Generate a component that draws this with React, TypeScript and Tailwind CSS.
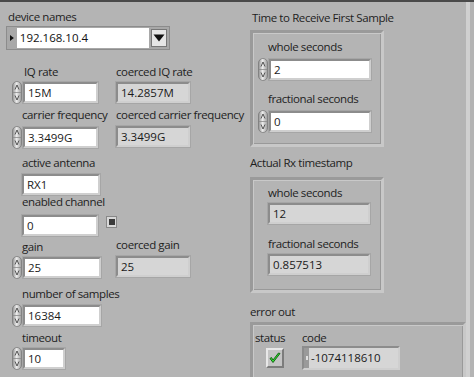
import React from 'react'

const font = { fontFamily: '"Open Sans", "DejaVu Sans", sans-serif' }

function Spinner() {
  return (
    <svg width="10" height="23" viewBox="0 0 10 23" className="shrink-0">
      <defs>
        <linearGradient id="sp" x1="0" x2="1" y1="0" y2="0">
          <stop offset="0" stopColor="#8e8e8e" />
          <stop offset="0.45" stopColor="#ececec" />
          <stop offset="1" stopColor="#9a9a9a" />
        </linearGradient>
      </defs>
      <rect x="0.5" y="0.5" width="9" height="22" rx="4.5" fill="url(#sp)" stroke="#7a7a7a" strokeWidth="0.8" />
      <line x1="1" y1="11.5" x2="9" y2="11.5" stroke="#8a8a8a" strokeWidth="0.8" />
      <path d="M3 8.5 L5 4 L7 8.5" fill="none" stroke="#444" strokeWidth="0.9" />
      <path d="M3 14.5 L5 19 L7 14.5" fill="none" stroke="#444" strokeWidth="0.9" />
    </svg>
  )
}

function Box({ value, w, ind = false }: { value: string; w: string; ind?: boolean }) {
  return (
    <div
      className={`${w} h-[21px] border-2 border-t-[#8c8c8c] border-l-[#8c8c8c] border-b-[#cfcfcf] border-r-[#cfcfcf] ${
        ind ? 'bg-[#d6d6d6]' : 'bg-white'
      } flex items-center pl-[3px] text-[11.5px] text-[#1a1a1a] leading-none shadow-[0_0_0_1px_#a6a6a6]`}
    >
      {value}
    </div>
  )
}

function Label({ children, className = '' }: { children: React.ReactNode; className?: string }) {
  return <div className={`h-[14px] leading-[14px] text-[11.5px] text-[#1e1e1e] tracking-[-0.4px] whitespace-nowrap ${className}`}>{children}</div>
}

function Cluster({ children, className = '' }: { children: React.ReactNode; className?: string }) {
  return (
    <div
      className={`border-[3px] border-t-[#9a9a9a] border-l-[#9a9a9a] border-b-[#c8c8c8] border-r-[#c8c8c8] shadow-[inset_1px_1px_0_#c9c9c9,inset_-1px_-1px_0_#999] ${className}`}
    >
      {children}
    </div>
  )
}

function SpinField({ value, w }: { value: string; w: string }) {
  return (
    <div className="flex items-center gap-[1px] -ml-[10px]">
      <Spinner />
      <Box value={value} w={w} />
    </div>
  )
}

export default function App() {
  return (
    <div
      style={font}
      className="w-[474px] h-[380px] bg-[#b4b4b4] border-t-2 border-t-[#4a4a4a] border-b-[3px] border-b-white overflow-hidden flex"
    >
      {/* left column */}
      <div className="w-[244px] pt-[8px] pl-[6px]">
        <Label className="ml-[2px]">device names</Label>
        <div className="mt-[2px] w-[164px] h-[24px] bg-[#a8a8a8] border border-[#8c8c8c] flex items-center pl-[2px] pr-[2px]">
          <svg width="6" height="8" viewBox="0 0 6 8" className="mr-[2px]">
            <path d="M1 1 L5 4 L1 7 Z" fill="#111" />
          </svg>
          <div className="h-[20px] w-[136px] bg-white flex items-center pl-[3px] text-[11.5px] text-[#111]">192.168.10.4</div>
          <div className="ml-[2px] h-[18px] w-[16px] bg-[#e6e6e6] border border-[#777] flex items-center justify-center">
            <svg width="12" height="8" viewBox="0 0 12 8">
              <path d="M0.5 0.5 L11.5 0.5 L6 7.5 Z" fill="#111" />
            </svg>
          </div>
        </div>

        <div className="pl-[16px]">
          <div className="mt-[15px] flex">
            <div className="w-[94px]">
              <Label className="ml-[2px]">IQ rate</Label>
              <div className="mt-[2px]">
                <SpinField value="15M" w="w-[75px]" />
              </div>
            </div>
            <div>
              <Label>coerced IQ rate</Label>
              <div className="mt-[3px]">
                <Box value="14.2857M" w="w-[74px]" ind />
              </div>
            </div>
          </div>

          <div className="mt-[4px] flex">
            <div className="w-[94px]">
              <Label>carrier frequency</Label>
              <div className="mt-[4px]">
                <SpinField value="3.3499G" w="w-[75px]" />
              </div>
            </div>
            <div>
              <Label>coerced carrier frequency</Label>
              <div className="mt-[4px]">
                <Box value="3.3499G" w="w-[74px]" ind />
              </div>
            </div>
          </div>

          <Label className="mt-[7px]">active antenna</Label>
          <div className="mt-[4px]">
            <Box value="RX1" w="w-[78px]" />
          </div>

          <Label>enabled channel</Label>
          <div className="mt-[6px] flex items-start">
            <Box value="0" w="w-[76px]" />
            <div className="ml-[8px] mt-[1px] w-[11px] h-[12px] bg-[#d8d8d8] border border-[#888] flex items-center justify-center">
              <div className="w-[6px] h-[6px] bg-[#3a3a3a]" />
            </div>
          </div>

          <div className="mt-[2px] flex">
            <div className="w-[94px]">
              <Label className="mt-[2px]">gain</Label>
              <div className="mt-[2px]">
                <SpinField value="25" w="w-[78px]" />
              </div>
            </div>
            <div>
              <Label>coerced gain</Label>
              <div className="mt-[4px]">
                <Box value="25" w="w-[74px]" ind />
              </div>
            </div>
          </div>

          <Label className="mt-[8px]">number of samples</Label>
          <div className="mt-[3px]">
            <SpinField value="16384" w="w-[78px]" />
          </div>

          <Label className="mt-[4px]">timeout</Label>
          <div className="mt-[2px]">
            <SpinField value="10" w="w-[42px]" />
          </div>
        </div>
      </div>

      {/* right column */}
      <div className="flex-1 pt-[9px] pl-[6px] border-r-[4px] border-r-[#d0d0d0] mr-[4px]">
        <Label className="ml-[2px]">Time to Receive First Sample</Label>
        <Cluster className="mt-[5px] w-[134px] h-[117px] pl-[15px] pt-[7px]">
          <Label>whole seconds</Label>
          <div className="mt-[4px]">
            <SpinField value="2" w="w-[102px]" />
          </div>
          <Label className="mt-[11px]">fractional seconds</Label>
          <div className="mt-[4px]">
            <SpinField value="0" w="w-[102px]" />
          </div>
        </Cluster>

        <Label className="mt-[9px]">Actual Rx timestamp</Label>
        <Cluster className="mt-[7px] w-[134px] h-[116px] pl-[15px] pt-[6px]">
          <Label>whole seconds</Label>
          <div className="mt-[3px]">
            <Box value="12" w="w-[102px]" ind />
          </div>
          <Label className="mt-[13px]">fractional seconds</Label>
          <div className="mt-[3px]">
            <Box value="0.857513" w="w-[102px]" ind />
          </div>
        </Cluster>

        <Label className="mt-[12px]">error out</Label>
        <Cluster className="mt-[3px] w-[216px] h-[70px] pl-[2px] pt-[6px] flex">
          <div className="w-[47px]">
            <Label>status</Label>
            <div className="mt-[3px] ml-[11px] w-[18px] h-[20px] bg-[#c4c4c4] border-2 border-t-[#e8e8e8] border-l-[#e8e8e8] border-b-[#7c7c7c] border-r-[#7c7c7c] flex items-center justify-center">
              <svg width="12" height="12" viewBox="0 0 12 12">
                <path d="M1 6.5 L4 10.5 L11 1.5 L9.5 1 L4 8 L2.5 5.5 Z" fill="#33e033" stroke="#0a5a0a" strokeWidth="0.9" strokeLinejoin="round" />
              </svg>
            </div>
          </div>
          <div>
            <Label>code</Label>
            <div className="mt-[1px] flex items-center h-[24px] w-[98px] border-2 border-t-[#8c8c8c] border-l-[#8c8c8c] border-b-[#cfcfcf] border-r-[#cfcfcf] bg-[#d6d6d6]">
              <div className="w-[5px] h-full bg-[#9a9a9a] flex items-center justify-center">
                <div className="w-[2px] h-[4px] bg-[#e0e0e0]" />
              </div>
              <div className="pl-[2px] text-[11.5px] text-[#1a1a1a]">-1074118610</div>
            </div>
          </div>
        </Cluster>
      </div>
    </div>
  )
}
